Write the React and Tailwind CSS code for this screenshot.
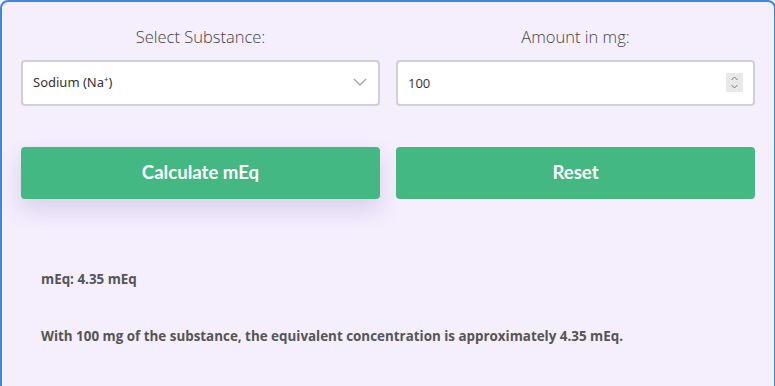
import { useState } from "react";

export default function App() {
  const [substance, setSubstance] = useState("na");
  const [amount, setAmount] = useState("100");

  return (
    <div className="w-[775px] h-[386px] overflow-hidden bg-white">
      <div className="w-[776px] h-[400px] rounded-lg border-2 border-[#3b86e6] bg-[#f4eefd] px-[19px] pt-[24px] font-['Open_Sans',sans-serif]">
        {/* INPUTS */}
        <div className="grid grid-cols-2 gap-4">
          <div className="flex flex-col items-center">
            <label className="text-[16.5px] font-light text-[#444] leading-[22px]">Select Substance:</label>
            <div className="relative mt-[12px] w-full">
              <select
                value={substance}
                onChange={(e) => setSubstance(e.target.value)}
                className="w-full h-[46px] appearance-none rounded border-2 border-[#cfcfd4] bg-white pl-[10px] text-[13px] text-[#333] outline-none font-['Noto_Sans',sans-serif]"
              >
                <option value="na">Sodium (Na⁺)</option>
                <option value="k">Potassium (K⁺)</option>
              </select>
              <svg
                className="pointer-events-none absolute right-[13px] top-[17px]"
                width="14"
                height="10"
                viewBox="0 0 14 10"
              >
                <path d="M1 2l6 6 6-6" fill="none" stroke="#a9a9ad" strokeWidth="1.5" />
              </svg>
            </div>
          </div>

          <div className="flex flex-col items-center">
            <label className="text-[16.5px] font-light text-[#444] leading-[22px]">Amount in mg:</label>
            <div className="relative mt-[12px] w-full">
              <input
                value={amount}
                onChange={(e) => setAmount(e.target.value)}
                className="w-full h-[46px] rounded border-2 border-[#cfcfd4] bg-white pl-[10px] text-[13px] text-[#333] outline-none"
              />
              <div className="pointer-events-none absolute right-[12px] top-[13px] flex h-[19px] w-[17px] flex-col items-center justify-center bg-[#e9e9ec]">
                <svg width="9" height="15" viewBox="0 0 9 15">
                  <path d="M1.5 5l3-3 3 3M1.5 10l3 3 3-3" fill="none" stroke="#777" strokeWidth="1" />
                </svg>
              </div>
            </div>
          </div>
        </div>

        {/* BUTTONS */}
        <div className="mt-[41px] grid grid-cols-2 gap-4">
          <button className="h-[52px] rounded bg-[#43b883] text-[18.6px] font-bold text-white font-['Lato',sans-serif] shadow-[0_10px_22px_rgba(120,100,170,0.22)]">
            Calculate mEq
          </button>
          <button className="h-[52px] rounded bg-[#43b883] text-[18.6px] font-bold text-white font-['Lato',sans-serif]">
            Reset
          </button>
        </div>

        {/* RESULT */}
        <div className="mt-[71px] px-[20px] text-[13.4px] font-bold text-[#555] font-['Open_Sans',sans-serif]">
          <p className="leading-[18px]">mEq: 4.35 mEq</p>
          <p className="mt-[39px] leading-[18px]">
            With 100 mg of the substance, the equivalent concentration is approximately 4.35 mEq.
          </p>
        </div>
      </div>
    </div>
  );
}
